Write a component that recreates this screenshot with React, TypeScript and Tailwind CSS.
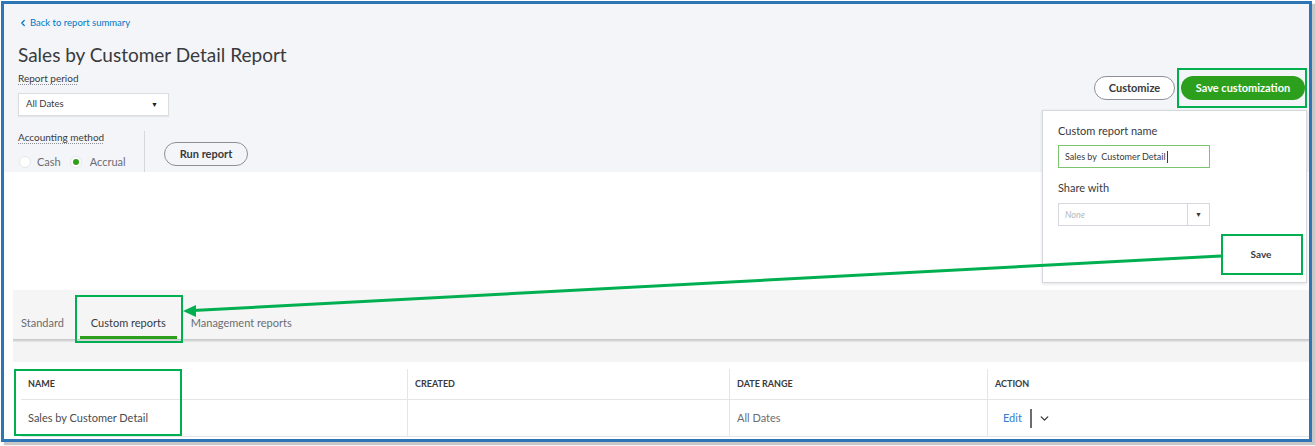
import { ChevronDown, ChevronLeft } from "lucide-react";

const labelCls =
  "text-[10px] leading-[12px] text-[#393a3d] underline decoration-dotted decoration-[#8d9096] underline-offset-2";

function Annotation({ className }: { className: string }) {
  return <div className={`pointer-events-none absolute border-2 border-[#00b050] ${className}`} />;
}

function SavePanel() {
  return (
    <div className="absolute right-[-2px] top-[34px] z-10 h-[173px] w-[265px] border border-[#d4d7dc] bg-white pl-[15px] pt-[14px] shadow-[0_1px_3px_rgba(0,0,0,0.12)]">
      <p className="text-[11px] leading-[12px] text-[#393a3d]">Custom report name</p>
      <div className="mt-[8px] flex h-[23px] w-[152px] items-center border border-[#7dc46f] bg-white pl-[6px] text-[9px] text-[#393a3d]">
        Sales by&nbsp; Customer Detail
        <span className="ml-px h-[12px] w-px bg-[#393a3d]" />
      </div>
      <p className="mt-[14px] text-[11px] leading-[12px] text-[#393a3d]">Share with</p>
      <div className="mt-[9px] flex h-[23px] w-[152px] border border-[#d4d7dc] bg-white">
        <span className="flex flex-1 items-center pl-[6px] text-[9px] italic text-[#b5b7bc]">None</span>
        <span className="flex w-[22px] items-center justify-center border-l border-[#d4d7dc] text-[7px] text-[#393a3d]">
          ▼
        </span>
      </div>
      <div className="mr-[8px] mt-[12px] flex justify-end">
        <button className="h-[32px] w-[74px] text-[10px] font-bold text-[#393a3d]">Save</button>
      </div>
    </div>
  );
}

export default function App() {
  return (
    <div className="h-[446px] w-[1315px] bg-white pl-px pt-px font-['Lato','Liberation_Sans',sans-serif]">
      <div className="relative flex h-[441px] w-[1311px] flex-col border-[3px] border-[#2e75b6] bg-white shadow-[3px_3px_1px_rgba(0,0,0,0.22)]">
        {/* header */}
        <div className="flex h-[168px] shrink-0 justify-between bg-[#f4f5f8] pl-[14px] pr-[4px]">
          <div className="pt-[14px]">
            <a className="flex items-center gap-[2px] text-[9.5px] leading-[10px] text-[#0077c5]">
              <ChevronLeft className="h-[10px] w-[10px]" strokeWidth={3} />
              Back to report summary
            </a>
            <h1 className="mt-[15px] text-[19px] leading-[24px] text-[#393a3d]">
              Sales by Customer Detail Report
            </h1>
            <p className={`mt-[5px] ${labelCls}`}>Report period</p>
            <div className="mt-[9px] flex h-[23px] w-[151px] items-center justify-between border border-[#dcdde0] bg-white pl-[7px] pr-[10px] shadow-[0_1px_1px_rgba(0,0,0,0.06)]">
              <span className="text-[9.5px] text-[#393a3d]">All Dates</span>
              <span className="text-[7px] text-[#222]">▼</span>
            </div>
            <div className="mt-[15px] flex h-[41px]">
              <div className="w-[126px]">
                <p className={labelCls}>Accounting method</p>
                <div className="mt-[13px] flex items-center text-[11px] leading-[12px] text-[#6b6c72]">
                  <span className="ml-px h-[12px] w-[12px] rounded-full border border-[#e6e7ea] bg-white" />
                  <span className="ml-[6px]">Cash</span>
                  <span className="ml-[9px] flex h-[12px] w-[12px] items-center justify-center rounded-full border border-[#e6e7ea] bg-white">
                    <span className="h-[6px] w-[6px] rounded-full bg-[#2ca01c]" />
                  </span>
                  <span className="ml-[8px]">Accrual</span>
                </div>
              </div>
              <div className="border-l border-[#d4d7dc]" />
              <button className="ml-[19px] mt-[11px] h-[24px] w-[84px] rounded-full border-[1.5px] border-[#8d9096] text-[11px] font-bold text-[#393a3d]">
                Run report
              </button>
            </div>
          </div>

          <div className="relative mt-[72px] flex h-[24px] gap-[6px]">
            <button className="h-[24px] w-[81px] rounded-full border-[1.5px] border-[#8d9096] bg-white text-[11px] font-bold text-[#393a3d]">
              Customize
            </button>
            <button className="h-[24px] w-[124px] rounded-full bg-[#2ca01c] text-[11px] font-bold text-white">
              Save customization
            </button>
            <SavePanel />
          </div>
        </div>

        {/* report list */}
        <div className="ml-[9px] mt-[118px]">
          <div className="flex h-[49px] items-end bg-[#f5f5f5] pl-[8px] text-[11px] leading-[14px]">
            <div className="border-b-[3px] border-transparent pb-[6px] text-[#6b6c72]">Standard</div>
            <div className="ml-[16px] border-b-[3px] border-[#2ca01c] px-[11px] pb-[6px] text-[#393a3d]">
              Custom reports
            </div>
            <div className="ml-[3px] border-b-[3px] border-transparent px-[11px] pb-[6px] text-[#6b6c72]">
              Management reports
            </div>
          </div>
          <div className="h-[3px] bg-linear-to-b from-[#c4c5c7] to-[#e8e8e8]" />
          <div className="h-[20px] bg-[#f4f4f4]" />
          <div className="ml-[8px] bg-white pt-[7px] text-[#393a3d]">
            <div className="grid h-[31px] grid-cols-[386px_322px_258px_1fr] border-b border-[#e3e5e8] text-[9px] font-bold">
              <div className="flex items-center pl-[7px]">NAME</div>
              <div className="flex items-center border-l border-[#e3e5e8] pl-[7px]">CREATED</div>
              <div className="flex items-center border-l border-[#e3e5e8] pl-[7px]">DATE RANGE</div>
              <div className="flex items-center border-l border-[#e3e5e8] pl-[7px]">ACTION</div>
            </div>
            <div className="grid h-[37px] grid-cols-[386px_322px_258px_1fr] border-b border-[#e3e5e8] text-[11px]">
              <div className="flex items-center pl-[7px] text-[#4a4b50]">Sales by Customer Detail</div>
              <div className="border-l border-[#e3e5e8]" />
              <div className="flex items-center border-l border-[#e3e5e8] pl-[7px] text-[#6b6c72]">All Dates</div>
              <div className="flex items-center border-l border-[#e3e5e8] pl-[15px]">
                <span className="text-[#2d7fd0]">Edit</span>
                <span className="ml-[8px] h-[19px] w-[2px] bg-[#6b6c72]" />
                <ChevronDown className="ml-[6px] h-[13px] w-[13px] text-[#393a3d]" strokeWidth={2.5} />
              </div>
            </div>
          </div>
        </div>

        {/* annotations */}
        <Annotation className="left-[1173px] top-[64px] z-20 h-[40px] w-[130px]" />
        <Annotation className="left-[1217px] top-[230px] z-20 h-[41px] w-[82px]" />
        <Annotation className="left-[71px] top-[291px] z-20 h-[48px] w-[108px]" />
        <Annotation className="left-[10px] top-[365px] z-20 h-[67px] w-[168px]" />
        <svg className="pointer-events-none absolute left-0 top-0 z-20" width="1305" height="435">
          <line x1="1217" y1="252" x2="189" y2="306.5" stroke="#00b050" strokeWidth="3" />
          <polygon points="179,307 192,301 192,313" fill="#00b050" />
        </svg>
      </div>
    </div>
  );
}
